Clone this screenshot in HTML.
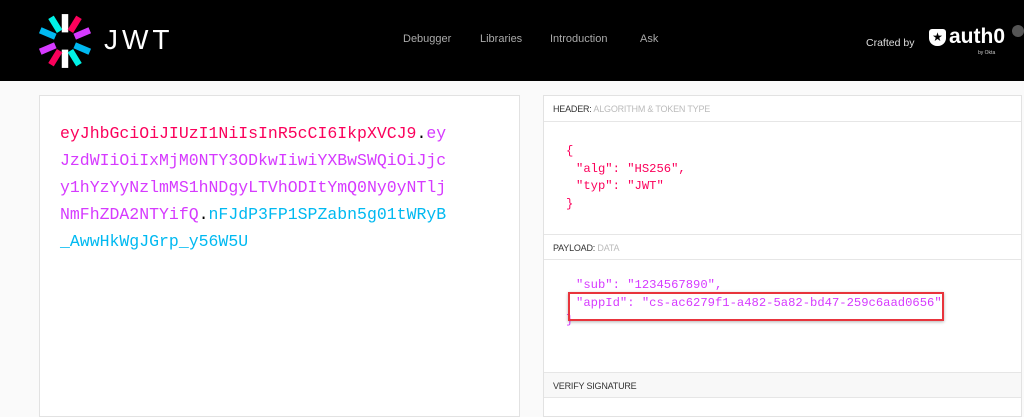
<!DOCTYPE html>
<html><head><style>
body{margin:0;width:1024px;height:401px;overflow:hidden;background:#fafafa;font-family:"Liberation Sans",sans-serif;position:relative}
.top{position:absolute;left:0;top:0;width:1024px;height:81px;background:#000}
.nav{position:absolute;top:33px;color:#aaa;font-size:11px}
.left{position:absolute;left:39px;top:95px;width:479px;height:320px;background:#fff;border:1px solid #e2e2e2}
.tok{position:absolute;left:20px;top:24px;width:390px;font-family:"Liberation Mono",monospace;font-size:16.5px;line-height:27px;word-break:break-all}
.r{color:#fb015b}.p{color:#d63aff}.c{color:#00b9f1}
.right{position:absolute;left:543px;top:95px;width:477px;height:320px;background:#fff;border:1px solid #e2e2e2}
.bar{position:absolute;left:0;width:477px;height:26px;border-top:1px solid #e6e6e6;border-bottom:1px solid #e6e6e6;background:#fff;font-size:9px;color:#333;line-height:26px;padding-left:9px;box-sizing:border-box;letter-spacing:-.2px}
.bar span{color:#bbb}
.code{position:absolute;left:22px;font-family:"Liberation Mono",monospace;font-size:12.2px;line-height:17.5px;color:#fb015b;white-space:pre}
.code div.i{padding-left:10px}
</style></head><body>
<div class="top">
<svg style="position:absolute;left:37px;top:13px" width="56" height="56" viewBox="-26 -26 52 52">
<g stroke-width="6" stroke-linecap="butt">
<line x1="0" y1="-25" x2="0" y2="-8" stroke="#fff"/>
<line x1="0" y1="25" x2="0" y2="8" stroke="#fff"/>
<line x1="5" y1="-9" x2="13" y2="-22" stroke="#fb015b"/>
<line x1="-5" y1="9" x2="-13" y2="22" stroke="#fb015b"/>
<line x1="-5" y1="-9" x2="-13" y2="-22" stroke="#00f2e6"/>
<line x1="5" y1="9" x2="13" y2="22" stroke="#00f2e6"/>
<line x1="9" y1="-4" x2="23" y2="-10" stroke="#d63aff"/>
<line x1="-9" y1="4" x2="-23" y2="10" stroke="#d63aff"/>
<line x1="-9" y1="-4" x2="-23" y2="-10" stroke="#00b9f1"/>
<line x1="9" y1="4" x2="23" y2="10" stroke="#00b9f1"/>
</g></svg>
<div style="position:absolute;left:104px;top:24px;color:#fff;font-size:28px;font-weight:300;letter-spacing:4px">JWT</div>
<div class="nav" style="left:403px">Debugger</div>
<div class="nav" style="left:480px">Libraries</div>
<div class="nav" style="left:550px">Introduction</div>
<div class="nav" style="left:640px">Ask</div>
<div style="position:absolute;left:866px;top:37px;color:#ddd;font-size:10.5px">Crafted by</div>
<div style="position:absolute;left:929px;top:29px;width:17px;height:17px;background:#fff;border-radius:3px 3px 8px 8px;color:#000;font-size:12px;text-align:center;line-height:17px">★</div>
<div style="position:absolute;left:949px;top:25px;color:#fff;font-size:21px;font-weight:bold">auth0</div>
<div style="position:absolute;left:978px;top:50px;color:#ccc;font-size:5px">by Okta</div>
<div style="position:absolute;left:1012px;top:25px;width:12px;height:12px;background:#555;border-radius:50%"></div>
</div>
<div class="left"><div class="tok"><span class="r">eyJhbGciOiJIUzI1NiIsInR5cCI6IkpXVCJ9</span><span style="color:#000">.</span><span class="p">eyJzdWIiOiIxMjM0NTY3ODkwIiwiYXBwSWQiOiJjcy1hYzYyNzlmMS1hNDgyLTVhODItYmQ0Ny0yNTljNmFhZDA2NTYifQ</span><span style="color:#000">.</span><span class="c">nFJdP3FP1SPZabn5g01tWRyB_AwwHkWgJGrp_y56W5U</span></div></div>
<div class="right">
<div class="bar" style="top:0;border-top:none">HEADER: <span>ALGORITHM &amp; TOKEN TYPE</span></div>
<div class="code" style="top:47px"><div>{</div><div class="i">"alg": "HS256",</div><div class="i">"typ": "JWT"</div><div>}</div></div>
<div class="bar" style="top:138px">PAYLOAD: <span>DATA</span></div>
<div class="code" style="top:181px;color:#d63aff"><div class="i">"sub": "1234567890",</div><div class="i">"appId": "cs-ac6279f1-a482-5a82-bd47-259c6aad0656"</div><div>}</div></div>
<div style="position:absolute;left:24px;top:196px;width:376px;height:29px;border:2px solid #e8343c;box-sizing:border-box;box-shadow:0 1px 3px rgba(0,0,0,.3)"></div>
<div class="bar" style="top:276px;background:#f8f8f8">VERIFY SIGNATURE</div>
</div>
</body></html>
